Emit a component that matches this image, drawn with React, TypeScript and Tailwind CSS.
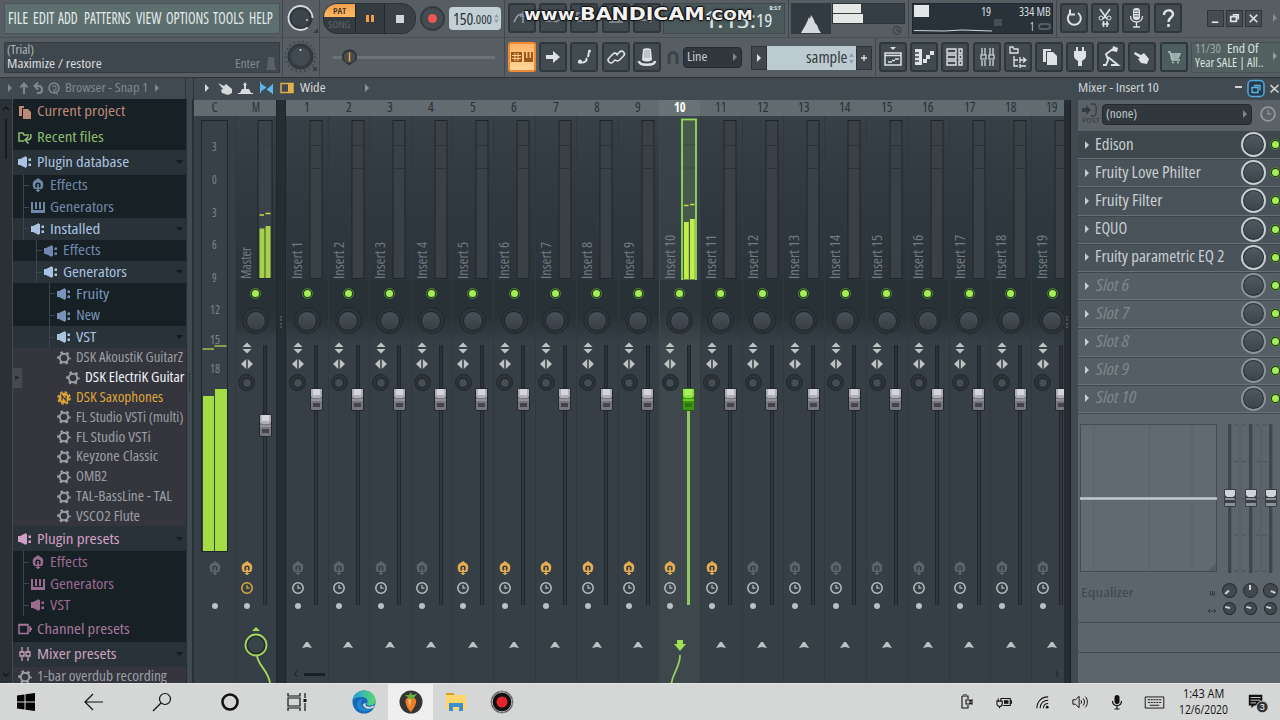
import { useLayoutEffect, useRef, useState, type ReactNode } from 'react';

// Squeezes or stretches a label to an exact width, for the condensed look
function Fit({ w, children, className = '' }: { w: number; children: ReactNode; className?: string }) {
  const ref = useRef<HTMLSpanElement>(null);
  const [scale, setScale] = useState(1);
  useLayoutEffect(() => {
    if (ref.current) setScale(w / ref.current.offsetWidth);
  }, [w]);
  return (
    <span className={`block shrink-0 whitespace-nowrap ${className}`} style={{ width: w }}>
      <span ref={ref} className="inline-block origin-left align-top" style={{ transform: `scaleX(${scale})` }}>
        {children}
      </span>
    </span>
  );
}

const f = 'fill-none stroke-current';

const icons: Record<string, ReactNode> = {
  plug: <path d="M0 4h2l6-3v12l-6-3H0zM7 2h2v10H7zM10.500 3.500H13V6h-2.500zM10.500 8.500H13V11h-2.500z" fill="currentColor" />,
  fx: (
    <g fill="currentColor">
      <path d="M7 0l2.500 2C13 3 12.800 8 11 11H8.800C10 8 10.500 4.500 7 4.500S4 8 5.200 11H3C1.200 8 1 3 4.500 2z" />
      <path d="M6.200 6h1.600v3.500h1.400V11H7.800v1h1.400v1H7.800v1H6.200v-1H4.800v-1h1.400v-1H4.800V9.500h1.400z" />
    </g>
  ),
  keys: <path d="M1 2v10h12V2M5 2v7M9 2v7M2 11h10" className={f} strokeWidth="2" />,
  files: <path d="M1 1h5v2H4v8H1zM5 4h5l3 3v7H5z" fill="currentColor" />,
  recent: <path d="M6 11H1V3h4l1 2h5M12.500 4c1.500 5-1 6-5 6M10.500 6.500L7 10l3.500 3.500" className={f} strokeWidth="1.600" />,
  gear: (
    <g className={f}>
      <circle cx="7" cy="7" r="4.200" strokeWidth="1.900" />
      <circle cx="7" cy="7" r="5.800" strokeWidth="2" strokeDasharray="2.600 3.470" strokeDashoffset="1.300" />
    </g>
  ),
  newgear: (
    <g>
      <circle cx="7" cy="7" r="5.300" fill="currentColor" />
      <circle cx="7" cy="7" r="6" className={f} strokeWidth="1.600" strokeDasharray="2.600 2.110" />
      <path d="M5 9.500v-5l4 5v-5" fill="none" stroke="#34343c" strokeWidth="1.200" />
    </g>
  ),
  channel: <path d="M1 2.500h9v9H1zM12 4v6M1 3h9M13.500 6v2" className={f} strokeWidth="1.500" />,
  mixer: <path d="M4 0v5M4 10v4M10 0v5M10 10v4M2 5h4v4H2zM8 5h4v4H8z" className={f} strokeWidth="1.300" />,
};

const Icon = ({ name, className = '' }: { name: string; className?: string }) => (
  <svg viewBox="0 0 14 14" className={`w-[14px] h-[14px] shrink-0 ${className}`}>{icons[name]}</svg>
);

type Row = { t: string; w: number; i: string; lvl: number; k: 'top' | 'sub' | 'open' | 'item' | 'head'; c: string; more?: number };

const rows: Row[] = [
  { t: 'Current project', w: 88, i: 'files', lvl: 0, k: 'top', c: 'text-[#bd8877]' },
  { t: 'Recent files', w: 67, i: 'recent', lvl: 0, k: 'top', c: 'text-[#8dbb6b]' },
  { t: 'Plugin database', w: 92, i: 'plug', lvl: 0, k: 'head', c: 'text-[#a9c3e0]' },
  { t: 'Effects', w: 38, i: 'fx', lvl: 1, k: 'sub', c: 'text-[#7088a8]' },
  { t: 'Generators', w: 64, i: 'keys', lvl: 1, k: 'sub', c: 'text-[#7088a8]' },
  { t: 'Installed', w: 50, i: 'plug', lvl: 1, k: 'open', c: 'text-[#a9c3e0]' },
  { t: 'Effects', w: 38, i: 'plug', lvl: 2, k: 'sub', c: 'text-[#7088b0]' },
  { t: 'Generators', w: 64, i: 'plug', lvl: 2, k: 'open', c: 'text-[#a9c3e0]' },
  { t: 'Fruity', w: 33, i: 'plug', lvl: 3, k: 'sub', c: 'text-[#7a93b8]' },
  { t: 'New', w: 24, i: 'plug', lvl: 3, k: 'sub', c: 'text-[#7a93b8]' },
  { t: 'VST', w: 20, i: 'plug', lvl: 3, k: 'open', c: 'text-[#a9c3e0]' },
  { t: 'DSK AkoustiK GuitarZ', w: 107, i: 'gear', lvl: 3, k: 'item', c: 'text-[#9b9fa5]' },
  { t: 'DSK ElectriK Guitar', w: 99, i: 'gear', lvl: 3, k: 'item', c: 'text-[#f0f3f5]', more: 8.5 },
  { t: 'DSK Saxophones', w: 87, i: 'newgear', lvl: 3, k: 'item', c: 'text-[#dfa63a]' },
  { t: 'FL Studio VSTi (multi)', w: 107, i: 'gear', lvl: 3, k: 'item', c: 'text-[#9b9fa5]' },
  { t: 'FL Studio VSTi', w: 75, i: 'gear', lvl: 3, k: 'item', c: 'text-[#9b9fa5]' },
  { t: 'Keyzone Classic', w: 82, i: 'gear', lvl: 3, k: 'item', c: 'text-[#9b9fa5]' },
  { t: 'OMB2', w: 31, i: 'gear', lvl: 3, k: 'item', c: 'text-[#9b9fa5]' },
  { t: 'TAL-BassLine - TAL', w: 96, i: 'gear', lvl: 3, k: 'item', c: 'text-[#9b9fa5]' },
  { t: 'VSCO2 Flute', w: 64, i: 'gear', lvl: 3, k: 'item', c: 'text-[#9b9fa5]' },
  { t: 'Plugin presets', w: 82, i: 'plug', lvl: 0, k: 'head', c: 'text-[#d29fc4]' },
  { t: 'Effects', w: 38, i: 'fx', lvl: 1, k: 'sub', c: 'text-[#9a6b90]' },
  { t: 'Generators', w: 64, i: 'keys', lvl: 1, k: 'sub', c: 'text-[#9a6b90]' },
  { t: 'VST', w: 20, i: 'plug', lvl: 1, k: 'sub', c: 'text-[#9a6b90]' },
  { t: 'Channel presets', w: 93, i: 'channel', lvl: 0, k: 'top', c: 'text-[#a5779b]' },
  { t: 'Mixer presets', w: 79, i: 'mixer', lvl: 0, k: 'head', c: 'text-[#c9a3c0]' },
  { t: '1-bar overdub recording', w: 130, i: 'gear', lvl: 0, k: 'item', c: 'text-[#9b9fa5]' },
];

const rowStyle = {
  top: 'h-[25.300px] bg-[#172025] text-[15px]',
  head: 'h-[25px] bg-[#283238] text-[15px]',
  open: 'h-[21.700px] bg-[#283238] text-[15px]',
  sub: 'h-[21.700px] bg-[#172025] text-[15px]',
  item: 'h-[19.800px] bg-[#34353d] text-[14px]',
};

function Browser() {
  return (
    <div className="w-[193px] shrink-0 flex flex-col bg-[#414a50] border-t border-[#30383d]">
      <div className="h-[21px] shrink-0 w-[186px] pb-px flex items-center border-r border-[#2b3338] text-[#7f888d]">
        <svg viewBox="0 0 62 16" className="w-[62px] h-4 shrink-0">
          <path d="M8 4l4 4-4 4z" fill="currentColor" />
          <path d="M24 14V4M20.500 7.500L24 3.500l3.500 4" className={f} strokeWidth="2" />
          <path d="M35 6h4c4 0 4 7 0 7h-2M38 2.500L34.500 6 38 9.500" className={f} strokeWidth="2" />
          <circle cx="54" cy="8" r="5" className={f} strokeWidth="1.500" />
          <path d="M52 6h4v4h-3l5 5" className={f} />
        </svg>
        <Fit w={83} className="ml-[3px] text-[12px] font-medium">Browser - Snap 1</Fit>
        <svg viewBox="0 0 4 8" className="ml-[7px] w-1 h-2"><path d="M0 0l4 4-4 4z" fill="currentColor" /></svg>
      </div>
      <div className="flex flex-1 min-h-0">
        <div className="w-3 shrink-0 bg-[#293137] flex flex-col items-center justify-between">
          <div className="flex flex-col items-center">
            <svg viewBox="0 0 8 5" className="mt-[7px] w-2 h-[5px]"><path d="M1 4l3-3 3 3" fill="none" stroke="#11181c" strokeWidth="1.500" /></svg>
            <div className="mt-2 w-[2px] h-[40px] bg-[#141b20]" />
          </div>
          <svg viewBox="0 0 8 5" className="mb-[6px] w-2 h-[5px]"><path d="M1 1l3 3 3-3" fill="none" stroke="#11181c" strokeWidth="1.500" /></svg>
        </div>
        <div className="w-[173px] ml-px shrink-0 overflow-hidden">
          {rows.map((r, n) => (
            <div key={n} className={`flex items-center ${rowStyle[r.k]} ${r.c}`}>
              <div className="shrink-0 self-stretch flex" style={{ width: 5 + r.lvl * 13.1 + (r.more ?? 0) }}>
                {r.lvl > 0 && r.k !== 'item' && (
                  <div className="flex-1 flex justify-end">
                    <div className="w-2 border-l border-[#3b474c] flex items-center"><div className="w-[5px] h-px bg-[#3b474c]" /></div>
                  </div>
                )}
                {n === 12 && <div className="w-[9px] h-full bg-[#45484e] flex items-center justify-center text-[6px] text-[#22282c]">▶</div>}
              </div>
              <Icon name={r.i} className={r.c === 'text-[#f0f3f5]' ? 'text-[#9b9fa5]' : ''} />
              <Fit w={r.w} className={`ml-[5px] -mt-[2px] ${r.k === 'item' ? '' : 'font-medium'}`}>{r.t}</Fit>
              {(r.k === 'head' || r.k === 'open') && (
                <svg viewBox="0 0 7 4" className="ml-auto mr-[3px] w-[7px] h-1"><path d="M0 0h7L3.500 4z" fill="#141b1f" /></svg>
              )}
            </div>
          ))}
        </div>
        <div className="flex-1 border-l border-[#262e33] border-r border-r-[#262e33] pt-[274px] flex justify-center">
          <div className="h-[18px] border-l border-dotted border-[#222a2f]" />
        </div>
      </div>
    </div>
  );
}

const Handle = ({ green = false }: { green?: boolean }) => (
  <svg viewBox="0 0 13 23" className="w-[13px] h-[23px] shrink-0">
    <rect x="0.500" y="0.500" width="12" height="22" rx="1.500" fill={green ? '#3f9412' : '#77787f'} stroke={green ? '#2c5c14' : '#23282d'} />
    <path d="M1 1h11v7l-2 2H3L1 8z" fill={green ? '#8fe045' : '#aeaeb7'} />
    <path d="M3 1h7v6H3z" fill={green ? '#a9f25e' : '#d4d4dc'} />
    <path d="M1 11h11v2H1z" fill={green ? '#69c92d' : '#92929b'} />
    <path d="M3 15h7v4H3z" fill={green ? '#2d7508' : '#45434c'} />
  </svg>
);

const Led = () => (
  <div className="w-[11px] h-[11px] rounded-full border border-[#55853a] bg-[#1f3520] flex items-center justify-center shrink-0">
    <div className="w-[7px] h-[7px] rounded-full bg-[#a6ee55]" />
  </div>
);

const Clock = ({ className }: { className: string }) => (
  <svg viewBox="0 0 12 12" className={`w-3 h-3 ${className}`}>
    <circle cx="6" cy="6" r="5.200" className={f} strokeWidth="1.500" />
    <path d="M6 3v3.200h2.500" className={f} strokeWidth="1.200" />
  </svg>
);

type StripProps = { head: string; label: string; labelW: number; fxOn?: boolean; selected?: boolean; master?: boolean };

function Strip({ head, label, labelW, fxOn, selected, master }: StripProps) {
  return (
    <div className={`w-[41.400px] shrink-0 flex flex-col border-l ${selected ? 'bg-[#3e474b] border-[#3e474b]' : 'bg-[#363f45] border-[#30393f]'}`}>
      <div className={`h-[16px] shrink-0 pb-[3px] -ml-px flex items-center justify-center text-[14px] leading-[14px] ${selected ? 'bg-[#697277] text-white font-bold' : 'bg-[#626b70] text-[#293136]'}`}>
        <Fit w={head === 'M' ? 8 : head.length * 5.8}>{head}</Fit>
      </div>
      <div className={`h-[164px] shrink-0 flex ${selected ? 'bg-linear-to-b from-[#3b444a] to-[#343e44]' : 'bg-linear-to-b from-[#384147] via-[#303840] to-[#2b343b]'}`}>
        <div className="w-[21px] flex flex-col justify-end pb-px">
          <div className="w-0 h-0 -rotate-90 origin-bottom-left">
            <Fit w={labelW} className="text-[14px] leading-[20px] text-[#727b80]">{label}</Fit>
          </div>
        </div>
        {master || selected ? (
          <svg viewBox="0 0 16 163" className="w-4 h-[163px] overflow-visible">
            <rect x="1" y={selected ? 3.5 : 4.5} width="14" height={selected ? 161 : 158} fill={selected ? '#46594a' : '#3b434a'} stroke={selected ? '#94d95b' : '#1d2429'} strokeWidth={selected ? 1.8 : 1} />
            <path d={master ? 'M2.500 99h4.500M8.500 97.500h5' : 'M3 89.500h4.500M9 88.500h4.500'} stroke="#c5dd48" strokeWidth="1.600" />
            <path d={master ? 'M2.500 112.500h5v49.500h-5zM8.500 110h5v52h-5z' : 'M3 106h4.800v57H3zM9 103h4.800v60H9z'} fill={master ? '#a6d149' : '#c1ee47'} />
            <path d="M2 29h12M2 52h12" stroke="#323a3f" strokeWidth="0.500" />
          </svg>
        ) : (
          <svg viewBox="0 0 16 163" className="w-4 h-[163px]">
            <rect x="2" y="4.500" width="12" height="158" fill="#394147" stroke="#1f262b" />
            <path d="M2 29.500h12M2 52.500h12" stroke="#2b3237" />
          </svg>
        )}
      </div>
      <div className={`h-[61px] shrink-0 flex flex-col items-center ${selected ? 'bg-linear-to-b from-[#2d373b] from-50% to-[#3c454a]' : 'bg-linear-to-b from-[#273136] from-60% to-[#363f45]'}`}>
        <div className="mt-2 -ml-px"><Led /></div>
        <div className="mt-[8px] -ml-px w-[27px] h-[27px] shrink-0 rounded-full bg-[#2c343a] border border-[#20272c] flex items-center justify-center">
          <div className="w-5 h-5 rounded-full border border-[#1d2429] bg-linear-to-b from-[#495158] to-[#373f45]" />
        </div>
      </div>
      <div className="h-[268px] shrink-0 flex">
        <div className="w-[21px] flex flex-col items-center text-[#bdc2c4]">
          <svg viewBox="0 0 12 30" className="mt-[1px] w-3 h-[30px] shrink-0">
            <path d="M1.500 5L6 .5 10.500 5zM1.500 7h9L6 11.500zM5.200 17v10L0 22zM6.800 17v10L12 22z" fill="currentColor" />
          </svg>
          <div className="mt-[2px] w-[17px] h-[17px] rounded-full bg-[#2c343a] border border-[#20272c] flex items-center justify-center shrink-0">
            <div className="w-[10px] h-[10px] rounded-full border border-[#1d2429] bg-[#444d53]" />
          </div>
          <Icon name="fx" className={`mt-[170px] ${fxOn ? 'text-[#e6ae50]' : 'text-[#5d656b]'}`} />
          <Clock className={`mt-[7px] shrink-0 ${master ? 'text-[#d9a93f]' : 'text-[#b8bec1]'}`} />
          <div className="mt-[9px] w-[6px] h-[6px] rounded-full bg-[#b9bfc2] shrink-0" />
        </div>
        <div className="w-4 flex flex-col items-center">
          <div className={`w-[4px] mt-[4px] shrink-0 bg-[#2a3237] border-x border-[#1f262b] ${master ? 'h-[69px]' : 'h-[43px]'}`} />
          <Handle green={selected} />
          <div className={`shrink-0 ${selected ? 'w-[3px] bg-[#8fc962]' : 'w-[4px] bg-[#2f373c] border-x border-[#20272c]'} ${master ? 'h-[168px]' : 'h-[194px]'}`} />
        </div>
      </div>
      <div className="flex-1 min-h-0 flex flex-col items-center">
        {master ? (
          <svg viewBox="0 0 30 57" className="mt-[18px] w-[30px] h-[57px] shrink-0">
            <path d="M11 4l4-4 4 4z" fill="#a4d85c" />
            <circle cx="15" cy="18" r="10.500" fill="#22292c" stroke="#a4d85c" strokeWidth="1.800" />
            <circle cx="15" cy="18" r="8" fill="#3b434a" />
            <path d="M16 29c2 11 11 14 13 27" fill="none" stroke="#a4d85c" strokeWidth="1.800" />
          </svg>
        ) : selected ? (
          <svg viewBox="0 0 20 46" className="mt-[31px] w-5 h-[46px] shrink-0">
            <path d="M7 0h6v4h3l-6 7-6-7h3z" fill="#9ee054" />
            <path d="M10 15c0 13-8 18-9 31" fill="none" stroke="#94cf62" strokeWidth="1.800" />
          </svg>
        ) : (
          <svg viewBox="0 0 10 6" className="-ml-px mt-[33px] w-[10px] h-[6px]"><path d="M0 6l4-6h2l4 6-5-1z" fill="#bcc1c3" /></svg>
        )}
      </div>
    </div>
  );
}

const inserts = Array.from({ length: 19 }, (_, i) => i + 1);
const scale = [['3', 'mt-[17px]'], ['0', 'mt-[17px]'], ['3', 'mt-[16.500px]'], ['6', 'mt-[16.500px]'], ['9', 'mt-[16.500px]'], ['12', 'mt-[16px]'], ['15', 'mt-[14px]'], ['18', 'mt-[13px]']];

function Mixer() {
  return (
    <div className="w-[885px] shrink-0 flex flex-col bg-[#414a50] border-t border-l border-[#2b3338]">
      <div className="h-[22px] shrink-0 pb-[2px] flex items-center text-[#d5dadc]">
        <svg viewBox="0 0 102 16" className="w-[102px] h-4 shrink-0">
          <path d="M11 4l4 4-4 4z" fill="currentColor" />
          <path d="M24 3l6 3 2-2 6 5v4l-4 2-6-2-1-3 2-1z" fill="currentColor" />
          <path d="M51 2l2 3h-1v4h3l2 4h2v1H44v-1h2l2-4h2V5h-1z" fill="currentColor" />
          <path d="M66 3l6 4v1l-6 4z M79 4v10l-6-4V9z" fill="#5fb5e8" />
          <path d="M66.500 2v11M78.500 4v10" stroke="#5fb5e8" />
          <path d="M87 3.500h12v9H87z" fill="none" stroke="#e2b04a" strokeWidth="1.500" />
          <path d="M94 4h5v8h-5z" fill="#e2b04a" />
        </svg>
        <Fit w={25} className="ml-1 text-[12px] font-medium">Wide</Fit>
        <svg viewBox="0 0 4 8" className="ml-[40px] w-1 h-2"><path d="M0 0l4 4-4 4z" fill="#8b9397" /></svg>
      </div>
      <div className="flex flex-1 min-h-0">
        <div className="w-[41px] shrink-0 bg-[#363f45] flex flex-col">
          <div className="h-4 shrink-0 pb-[3px] bg-[#626b70] flex items-center justify-center text-[14px] leading-[14px] text-[#293136]"><Fit w={6}>C</Fit></div>
          <div className="mt-[4px] mx-auto w-[27px] h-[432px] shrink-0 bg-[#394148] border border-[#1f262b] flex flex-col items-center text-[13px] leading-4 text-[#7b8489]">
            {scale.map(([s, mt], i) => <Fit key={i} w={s.length * 5} className={`${mt}`}>{s}</Fit>)}
            <svg viewBox="0 0 25 208" className="-mt-[32px] w-[25px] h-[208px] shrink-0">
              <path d="M0.500 5h11.500M12.500 2h12" stroke="#a2bf4e" strokeWidth="1.500" />
              <path d="M1 52h11v155H1zM13 45h12v162H13z" fill="#a3dc45" />
            </svg>
          </div>
          <Icon name="fx" className="mt-[9px] mx-auto text-[#5d656b]" />
          <div className="mt-[28px] mx-auto w-[6px] h-[6px] rounded-full bg-[#b9bfc2]" />
        </div>
        <Strip head="M" label="Master" labelW={32} fxOn master />
        <div className="w-[10px] shrink-0 bg-[#262e34] border-x border-[#1f262b] pt-[216px] flex justify-center">
          <div className="h-3 border-l-2 border-dotted border-[#495157]" />
        </div>
        <div className="relative w-[777.500px] shrink-0 overflow-hidden flex">
          {inserts.map((n) => (
            <Strip key={n} head={`${n}`} label={`Insert ${n}`} labelW={n > 9 ? 44 : 37} fxOn={n >= 5 && n <= 11} selected={n === 10} />
          ))}
          <div className="absolute left-[8px] right-[5px] bottom-[5px] flex items-center">
            <svg viewBox="0 0 4 8" className="w-1 h-2"><path d="M3 1L1 4l2 3" fill="none" stroke="#192025" /></svg>
            <div className="ml-[6px] w-[21px] h-[3px] bg-[#192025]" />
            <svg viewBox="0 0 4 8" className="ml-auto w-1 h-2"><path d="M1 1l2 3-2 3" fill="none" stroke="#192025" /></svg>
          </div>
        </div>
        <div className="w-[7px] bg-[#262e34] border-r border-[#1a2024] pt-[216px]"><div className="ml-[2px] h-3 w-0 border-l-2 border-dotted border-[#495157]" /></div>
        <div className="flex-1 bg-[#414a50]" />
      </div>
    </div>
  );
}

const slots: [string, number][] = [['Edison', 39], ['Fruity Love Philter', 106], ['Fruity Filter', 67], ['EQUO', 32], ['Fruity parametric EQ 2', 129], ['Slot 6', 33], ['Slot 7', 33], ['Slot 8', 33], ['Slot 9', 33], ['Slot 10', 40]];

const SmallHandle = () => (
  <svg viewBox="0 0 12 18" className="w-3 h-[18px] shrink-0">
    <rect width="12" height="18" rx="1" fill="#3b4046" />
    <path d="M1 1h10v5l-2 2H3L1 6z" fill="#ced4da" />
    <path d="M1 9h10v2H1zM1 14h10v3H1z" fill="#8a9299" />
  </svg>
);

const knobAngles = ['rotate-[-135deg]', 'rotate-0', 'rotate-[110deg]'];

function InsertPanel() {
  return (
    <div className="flex-1 overflow-hidden flex flex-col bg-[#414a50] border-t border-[#2b3338]">
      <div className="h-[22px] shrink-0 pb-[3px] flex items-center text-[#cdd3d6]">
        <Fit w={81} className="text-[12px] font-medium">Mixer - Insert 10</Fit>
        <svg viewBox="0 0 46 18" className="ml-[76px] w-[46px] h-[18px] shrink-0 overflow-visible">
          <path d="M0 8h7" stroke="currentColor" strokeWidth="2" />
          <rect x="13" y="1.500" width="16" height="16" rx="4" fill="#253b4a" stroke="#55aadd" strokeWidth="1.500" />
          <path d="M19 6.500h6v5M17 8.500h6v5h-6z" fill="none" stroke="#63b8e8" strokeWidth="1.300" />
          <path d="M35.500 6l8 7.500M43.500 6l-8 7.500" stroke="currentColor" strokeWidth="1.600" />
        </svg>
      </div>
      <div className="h-[31px] shrink-0 bg-[#5a6268] flex items-center pb-[3px]">
        <div className="w-[24px] flex flex-col items-center text-[#353d42]">
          <svg viewBox="0 0 16 14" className="w-4 h-[14px]"><path d="M0 5h4V2l5 5-5 5V9H0z" fill="currentColor" /><path d="M9 1h3c3 0 3 12 0 12H9" className={f} strokeWidth="1.300" /></svg>
          <Fit w={17} className="text-[7px] leading-[8px]">POST</Fit>
        </div>
        <div className="w-[150px] h-[21px] shrink-0 rounded-sm border border-[#242b30] bg-[#30383d] flex items-center pb-px px-[3px] text-[#c2c9cc]">
          <Fit w={31} className="text-[12px]">(none)</Fit>
          <svg viewBox="0 0 4 8" className="ml-auto mr-px w-1 h-2"><path d="M0 0l4 4-4 4z" fill="#7d868b" /></svg>
        </div>
        <svg viewBox="0 0 12 12" className="ml-[8px] shrink-0 w-4 h-4 text-[#8d9599]"><circle cx="6" cy="6" r="5.200" className={f} strokeWidth="1.400" /><path d="M6 3v3h2.500" className={f} /></svg>
      </div>
      {slots.map(([name, w], i) => (
        <div key={name} className={`h-[28.200px] shrink-0 w-[202px] flex items-center pb-px border-b border-b-[#697278] border-t border-t-[#3d464b] pl-[7px] ${i === 0 ? 'bg-[#3e474c]' : i < 5 ? 'bg-[#4a5359]' : 'bg-[#555e64]'}`}>
          <svg viewBox="0 0 4 8" className="w-1 h-2 shrink-0"><path d="M0 0l4 4-4 4z" fill="#c5ccd0" /></svg>
          <Fit w={w} className={`-mt-[2px] text-[16px] ${i < 5 ? 'ml-[6px] font-medium text-[#c7ced1]' : 'ml-[7px] italic font-medium text-[#7f878c]'}`}>{name}</Fit>
          <div className={`ml-auto w-[25px] h-[25px] shrink-0 rounded-full border-2 flex items-center justify-center ${i < 5 ? 'border-[#c8cfd3]' : 'border-[#8b9398]'} bg-[#272e33]`}>
            <div className="w-[19px] h-[19px] rounded-full bg-linear-to-b from-[#505860] to-[#3d454c]" />
          </div>
          <div className="ml-[4px] mr-[-1px] shrink-0"><Led /></div>
        </div>
      ))}
      <div className="flex-1 bg-[#5c656b] flex flex-col border-t border-[#414a4f]">
        <div className="h-[158px] shrink-0 flex pt-[10px] pl-[2px]">
          <svg viewBox="0 0 137 148" className="w-[137px] h-[148px] shrink-0">
            <rect x="0.500" y="0.500" width="136" height="147" fill="#616a70" stroke="#434c51" />
            <path d="M14 1v146M69.500 1v146M112 1v146" stroke="#596268" />
            <path d="M136 139v8h-8z" fill="#535c61" />
            <path d="M0 74.500h137" stroke="#bfc9d0" strokeWidth="2.500" />
          </svg>
          <div className="flex ml-[7px]">
            {[0, 1, 2].map((n) => (
              <div key={n} className="w-[20.600px] flex">
                <div className="w-3 shrink-0 flex flex-col items-center">
                  <div className="w-[4px] h-[65px] shrink-0 bg-[#3f474d] border-r border-[#50595e]" />
                  <SmallHandle />
                  <div className="w-[4px] h-[66px] shrink-0 bg-[#3f474d] border-r border-[#50595e]" />
                </div>
                {n < 2 && (
                  <svg viewBox="0 0 14 148" className="-ml-[3px] w-[14px] h-[148px] shrink-0">
                    <path d="M1 1h12M1 37.500h12M1 74.500h12M1 111h12M1 147h12" stroke="#4a5258" strokeDasharray="5 2" />
                    <path d="M7 2v144" stroke="#586167" strokeWidth="3" />
                  </svg>
                )}
              </div>
            ))}
          </div>
        </div>
        <div className="h-[51px] shrink-0 flex border-b border-[#434c51] pl-[3px] pt-[11px]">
          <Fit w={53} className="text-[13px] leading-[18px] font-medium text-[#3f484e]">Equalizer</Fit>
          <svg viewBox="0 0 10 30" className="ml-[73px] w-[10px] h-[30px] shrink-0"><path d="M3.500 8v4h4V8M5.500 8v4M1 28h8M3 26l-2 2 2 2M7 26l2 2-2 2" fill="none" stroke="#353d42" /></svg>
          <div className="ml-[5px] grid grid-cols-[20.600px_20.600px_20.600px] gap-y-[4px] content-start">
            {[0, 1, 2, 3, 4, 5].map((n) => (
              <div key={n} className={`rounded-full border border-[#252c31] bg-[#41494f] flex justify-center ${n < 3 ? `w-[15px] h-[15px] ${knobAngles[n]}` : 'w-[13px] h-[13px] ml-px rotate-[-75deg]'}`}>
                <div className="mt-px w-[2px] h-[5px] bg-[#cfd4d7]" />
              </div>
            ))}
          </div>
        </div>
        <div className="h-[30px] shrink-0 border-b border-[#434c51]" />
      </div>
    </div>
  );
}

const Tool = ({ children, className = 'bg-[#414a4f] text-[#dde2e4]' }: { children: ReactNode; className?: string }) => (
  <div className={`w-[28px] h-[30px] mr-[3.200px] shrink-0 rounded-[3px] border-2 border-[#30373c] flex items-center justify-center ${className}`}>
    <svg viewBox="0 0 20 20" className="w-5 h-5 shrink-0 overflow-visible">{children}</svg>
  </div>
);

const dim = 'bg-[#414a4f] text-[#9aa1a5]';

const Sep = ({ className = '' }: { className?: string }) => <div className={`w-px self-stretch shrink-0 bg-[#40484d] ${className}`} />;

const menu: [string, number, string][] = [['FILE', 20, ''], ['EDIT', 21, 'ml-[5px]'], ['ADD', 20, 'ml-[4px]'], ['PATTERNS', 47, 'ml-[6px]'], ['VIEW', 25, 'ml-[5px]'], ['OPTIONS', 43, 'ml-[5px]'], ['TOOLS', 31, 'ml-[4px]'], ['HELP', 24, 'ml-[5px]']];

function Toolbar() {
  return (
    <div className="relative h-[77px] shrink-0 bg-[#565e64] flex flex-col">
      <div className="h-[38px] flex items-start pt-[3px] border-b border-[#495156]">
        <div className="ml-1 w-[276px] h-[31px] shrink-0 border border-[#4b5559] bg-[#5d6f6f] flex items-center pl-[3px] text-[15.500px] font-medium text-[#e4eceb]">
          {menu.map(([t, w, m]) => <Fit key={t} w={w} className={m}>{t}</Fit>)}
        </div>
        <Sep className="ml-[2px] -mt-[3px] h-[38px]" />
        <svg viewBox="0 0 36 32" className="w-[36px] h-8 shrink-0">
          <circle cx="17.500" cy="15" r="12" fill="#30373d" stroke="#d4d9dc" strokeWidth="1.800" strokeDasharray="64 12" strokeDashoffset="-11" />
          <circle cx="17.500" cy="15" r="9" fill="#3d454c" />
          <circle cx="24" cy="17" r="1" fill="#c5cbcf" />
          <path d="M30 30h5v-5z" fill="#353d42" />
        </svg>
        <Sep className="-mt-[3px] h-[38px]" />
        <div className="ml-[3px] w-[93px] h-[31px] shrink-0 rounded-[14px] overflow-hidden border border-[#2b3237] bg-[#333b41] flex">
          <div className="w-[31px] flex flex-col items-center text-[9px] text-[#5d656a]">
            <div className="w-full h-[13px] bg-linear-to-b from-[#f0a04a] to-[#ffb866] flex items-center justify-center text-[#46301c] font-semibold"><Fit w={13}>PAT</Fit></div>
            <Fit w={23} className="mt-px">SONG</Fit>
          </div>
          <div className="w-[30px] border-x border-[#20272b] flex items-center justify-center gap-[2px]"><div className="w-[3px] h-[7px] bg-[#ee9e4b]" /><div className="w-[3px] h-[7px] bg-[#ee9e4b]" /></div>
          <div className="flex-1 flex items-center justify-center bg-[#394147]"><div className="w-[8px] h-[8px] bg-[#d1d6d8]" /></div>
        </div>
        <div className="ml-[4px] mt-[3px] w-[25px] h-[25px] shrink-0 rounded-full border-2 border-[#343b40] bg-[#444c52] flex items-center justify-center"><div className="w-[9px] h-[9px] rounded-full bg-[#ee5652]" /></div>
        <div className="ml-[4px] mt-[4px] w-[52px] h-[23px] shrink-0 rounded-[4px] bg-[#c3d0d6] text-[#2c3439] flex items-center pl-[4px]">
          <Fit w={20} className="text-[16px]">150</Fit><Fit w={19} className="text-[12px] mt-[3px]">.000</Fit>
          <svg viewBox="0 0 5 9" className="ml-[2px] w-[5px] h-[9px]"><path d="M0 3.500L2.500 0 5 3.500zM0 5.500h5L2.500 9z" fill="#93a0a6" /></svg>
        </div>
        <Sep className="ml-[3px] mr-[3px] -mt-[3px] h-[38px]" />
        <Tool className={dim}><path d="M2 14c3-7 5-8 9-8M11 3v12M8 8h8" className={f} strokeWidth="1.500" /></Tool>
        <Tool className={dim}><path d="M2 13h9a4 4 0 104-7" className={f} strokeWidth="1.500" /></Tool>
        <Tool className={dim}><path d="M3 5h5v4H3zM3 13h6M12 7v7M15 7v7" className={f} strokeWidth="1.500" /></Tool>
        <Tool className={dim}><path d="M3 14h14M6 14l4-7 4 7" className={f} strokeWidth="1.500" /></Tool>
        <Tool className={dim}><path d="M2 8h10v4H2zM13 14l4-6" className={f} strokeWidth="1.500" /></Tool>
        <div className="-ml-px w-[122px] h-[31px] shrink-0 bg-[#4b595b] border border-[#3f4a4d] text-[#dce5e6] flex items-end justify-end pr-[12px] relative">
          <Fit w={52} className="text-[24px] leading-[29px]">1:13:</Fit>
          <Fit w={16} className="text-[18px] leading-[25px]">19</Fit>
          <span className="absolute right-[3px] top-[1px] text-[6px] leading-[7px] font-bold">B:S:T</span>
        </div>
        <Sep className="ml-[3px] mr-[2px] -mt-[3px] h-[38px]" />
        <svg viewBox="0 0 40 31" className="w-10 h-[31px] shrink-0 bg-[#323b42]"><path d="M10 30l1-2 3-5 2-4 2-5 1 2 1-4 2 3 2 5 2 2 2 5 2 3z" fill="#d3d9dc" /></svg>
        <div className="ml-[1px] w-[73px] shrink-0 flex flex-col">
          <div className="h-[21px] bg-[#353e44] border border-[#2c3439] flex flex-col gap-px"><div className="w-[28px] h-[9px] bg-[#e5e8e4]" /><div className="w-[30px] h-[9px] bg-[#e5e8e4]" /></div>
          <svg viewBox="0 0 12 9" className="ml-auto mr-[2px] mt-[2px] w-3 h-[9px]"><circle cx="6" cy="4.500" r="4" fill="none" stroke="#343c41" /><path d="M6 2v3h3" stroke="#343c41" fill="none" /></svg>
        </div>
        <Sep className="ml-[3px] mr-[3px] -mt-[3px] h-[38px]" />
        <div className="w-[141px] h-[31px] shrink-0 bg-[#29323a] border border-[#20282e] flex text-[12px] leading-[15px] text-[#d5dbde]">
          <div className="w-[80px] flex flex-col justify-between">
            <div className="flex justify-between pr-[2px]"><div className="mt-px ml-px w-[15px] h-[12px] bg-[#e1e6e8]" /><Fit w={10}>19</Fit></div>
            <svg viewBox="0 0 80 4" className="w-20 h-1 mb-px"><path d="M1 2.500l30 .5 18-1 30 1" fill="none" stroke="#d0d6d9" /></svg>
          </div>
          <div className="flex-1 flex flex-col items-end pr-px">
            <Fit w={32}>334 MB</Fit>
            <div className="flex items-center gap-1 w-full"><div className="ml-px w-[8px] h-[7px] bg-[#454e54] -mt-2" /><Fit w={4} className="ml-auto">1</Fit><div className="w-[13px] h-[7px] rounded-full border-2 border-[#545d63]" /></div>
          </div>
        </div>
        <Sep className="ml-[3px] mr-[3px] -mt-[3px] h-[38px]" />
        <Tool><path d="M6 5.500a6.500 6.500 0 108-.5M6 1.500v5h5" className={f} strokeWidth="2" /></Tool>
        <Tool><path d="M5 1l7 10M15 1L8 11M7 16h7M8.500 13v6M12 13v6" className={f} strokeWidth="1.600" /><circle cx="6" cy="10" r="2" className={f} /><circle cx="14" cy="10" r="2" className={f} /></Tool>
        <Tool><rect x="7" y="0" width="7" height="12" rx="3" fill="currentColor" /><path d="M4.500 8c0 8 12 8 12 0M10.500 14v5M7 19h7" className={f} strokeWidth="1.300" /><path d="M8 3h5M8 5.500h5M8 8h5" stroke="#414a4f" strokeWidth="0.800" /></Tool>
        <Tool><path d="M6 7c0-6 9-6 9-1 0 4-4.500 3-4.500 8M10.500 16v3" className={f} strokeWidth="2.500" /></Tool>
        <div className="ml-[22px] mt-[7px] flex gap-[2px] text-[#dde2e4]">
          {['M4 12h7', 'M6 4h6v5M4 6h6v5H4z', 'M4 4l8 8M12 4l-8 8'].map((d) => (
            <div key={d} className="w-[17px] h-[17px] border border-[#2f363b] bg-[#444c52]"><svg viewBox="0 0 16 16" className="w-[15px] h-[15px]"><path d={d} className={f} strokeWidth="1.800" /></svg></div>
          ))}
        </div>
        <svg viewBox="0 0 4 8" className="ml-[11px] mt-[11px] w-1 h-2"><path d="M0 0l4 4-4 4z" fill="#858d92" /></svg>
      </div>

      <div className="h-[39px] flex items-start pt-[4px]">
        <div className="ml-1 w-[276px] h-[31px] shrink-0 border border-[#343b41] bg-[#3f474e] px-[2px] text-[#d7dcde] flex justify-between items-end">
          <div className="flex flex-col leading-[14px] text-[12px] pb-px"><Fit w={27} className="text-[#b0b7ba]">(Trial)</Fit><Fit w={95} className="font-medium">Maximize / restore</Fit></div>
          <div className="flex items-center gap-[5px] text-[#82898e] text-[12px] leading-[16px]"><Fit w={25}>Enter</Fit><svg viewBox="0 0 12 16" className="w-3 h-4"><path d="M4 2h4l1 10H3zM1 13h10" fill="#596168" stroke="#596168" strokeWidth="2" /></svg></div>
        </div>
        <Sep className="ml-[2px] -mt-[4px] h-[38px]" />
        <svg viewBox="0 0 36 32" className="-mt-px w-[36px] h-8 shrink-0">
          <circle cx="17.500" cy="15.500" r="15" fill="none" stroke="#3b4348" strokeWidth="2" strokeDasharray="1.500 3" />
          <circle cx="17.500" cy="15.500" r="12.500" fill="#343c42" stroke="#2a3136" />
          <circle cx="17.500" cy="15.500" r="9.500" fill="#424a51" />
          <circle cx="17.500" cy="9" r="1" fill="#d0d5d8" />
          <path d="M30 26h4v4h-4z" fill="#3b4348" />
        </svg>
        <Sep className="-mt-[4px] h-[38px]" />
        <svg viewBox="0 0 184 30" className="w-[184px] h-[30px] shrink-0">
          <path d="M13 15.500h162" stroke="#6c747a" strokeWidth="3" />
          <path d="M22 15c0-10 15-10 15 0 0 5-4 5-7.500 8.500C26 20 22 20 22 15z" fill="#2c3237" />
          <circle cx="29.500" cy="15" r="6" fill="#4a4b4c" /><path d="M29.500 10.500v9" stroke="#efa04a" strokeWidth="1.500" />
        </svg>
        <Sep className="mr-[3px] -mt-[4px] h-[38px]" />
        <Tool className="bg-linear-to-b from-[#ffb566] to-[#ffd69a] !border-[#ee8a36]"><path d="M-1 5h11v10H-1z M12 5h2v6h1.500V5h2v6H19V5h2v10h-9z" fill="#9c561a" /><path d="M0 8.500h9M0 11.500h9M3 6v8M6 6v8" stroke="#ffcf93" /></Tool>
        <Tool><path d="M3 8h7V4l7 6-7 6v-4H3z" fill="currentColor" /></Tool>
        <Tool><path d="M4 15c7 2 10-2 8-4M14 10l1-5" className={f} strokeWidth="2" /><circle cx="6" cy="14.500" r="2" fill="currentColor" /><circle cx="15.500" cy="4" r="1.500" fill="currentColor" /></Tool>
        <Tool><path d="M9 12L6.500 14.500a2.700 2.700 0 01-4-4l4-4a2.700 2.700 0 014 0M10 8l3-3.500a2.700 2.700 0 014 4l-4 4a2.700 2.700 0 01-4 0" transform="translate(.5 .5)" className={f} strokeWidth="1.600" /></Tool>
        <Tool><path d="M6 2c2-1 6-1 8 0l1 11c-3 2-7 2-10 0z" fill="currentColor" /><path d="M2 14c0 5 16 5 16 0" className={f} strokeWidth="2.500" /><path d="M8 3v8M10 3v8M12 3v8" stroke="#8b969d" strokeWidth="0.800" /></Tool>
        <svg viewBox="0 0 12 14" className="ml-[3px] mt-[9px] w-3 h-[14px] shrink-0"><path d="M2 13V6c0-6 8-6 8 0v7" fill="none" stroke="#3b4348" strokeWidth="3" /></svg>
        <div className="ml-[4px] mt-[5px] w-[59px] h-[21px] shrink-0 rounded-sm border border-[#242b30] bg-[#30383e] flex items-center pb-[2px] pl-[3px] pr-[4px] text-[#c8ced1]">
          <Fit w={20} className="text-[12px]">Line</Fit><svg viewBox="0 0 4 8" className="ml-auto w-1 h-2"><path d="M0 0l4 4-4 4z" fill="#7d868b" /></svg>
        </div>
        <div className="ml-[9px] mt-[4px] h-[24px] shrink-0 flex text-[#dce1e3]">
          <div className="w-[16px] border border-[#2c3338] bg-[#3f474d] flex items-center justify-center"><svg viewBox="0 0 4 8" className="w-1 h-2"><path d="M0 0l4 4-4 4z" fill="currentColor" /></svg></div>
          <div className="w-[89px] bg-[#bccad1] text-[#323a40] flex items-center pb-[3px] justify-end pr-[2px]"><Fit w={41} className="text-[17px]">sample</Fit><svg viewBox="0 0 5 11" className="ml-[2px] mt-[3px] w-[5px] h-[11px]"><path d="M0 4L2.500 0 5 4zM0 7h5L2.500 11z" fill="#93a0a6" /></svg></div>
          <div className="w-[16px] border border-[#2c3338] bg-[#3f474d] flex items-center justify-center"><svg viewBox="0 0 8 8" className="w-2 h-2"><path d="M4 1v6M1 4h6" className={f} strokeWidth="1.400" /></svg></div>
        </div>
        <Sep className="ml-[3px] mr-[3px] -mt-[4px] h-[38px]" />
        <Tool><path d="M7 0h6l-3 3z" fill="currentColor" /><path d="M2 6h16v12H2zM2 8.500h16M5 15h4M9 13.500h3M12 12h4" className={f} strokeWidth="1.500" /></Tool>
        <Tool><path d="M1 2h7v16H1zM9 12h4v4H9zM12 8h4v4h-4zM16 4h4v4h-4z" fill="currentColor" /><path d="M1 6h4M1 10h4M1 14h4" stroke="#414a4f" strokeWidth="1.500" /></Tool>
        <Tool><path d="M2 2h9v4H2zM2 8h9v4H2zM2 14h9v4H2zM14 2h3v4h-3zM14 8h3v4h-3zM14 14h3v4h-3z" className={f} strokeWidth="1.400" /></Tool>
        <Tool><path d="M5 1v7M8 1v7M5 13v6M8 13v6M13 1v7M16 1v7M13 13v6M16 13v6M4 8h5v4H4zM12 8h5v4h-5z" className={f} strokeWidth="1.200" /></Tool>
        <Tool><path d="M2 0h3l1 2h4v4H2zM6 9v10h4M6 13h4M12 10v6M12 13h6M15 10.500l3 2.500-3 2.500M12 17v4M12 19h6" className={f} strokeWidth="1.300" /></Tool>
        <Tool><path d="M4 2h8v2H7v11H4zM8 5h6l4 4v9H8z" fill="currentColor" /></Tool>
        <Tool><path d="M6 0h2v4h4V0h2v4h2v5c0 3-3 4-4 5v5H8v-5c-1-1-4-2-4-5V4h2z" fill="currentColor" /></Tool>
        <Tool><path d="M12-1l5 2-1 4-5-1z" fill="currentColor" /><path d="M12 2L5 7l2 6-2 5H2M7 10l10 8H10" className={f} strokeWidth="1.900" /></Tool>
        <Tool><path d="M3 5l6 3 3-2 5 6-2 5-6-1-3-4 2-1L2 7z" fill="currentColor" /></Tool>
        <Tool className="bg-[#4c5f5e] text-[#b7c6c4]"><path d="M4 5h2l2 8h8M7 7h9l-2 4H8M7 9h8" className={f} strokeWidth="1.300" /><circle cx="9" cy="15.500" r="1" fill="currentColor" /><circle cx="14" cy="15.500" r="1" fill="currentColor" /></Tool>
        <div className="w-[92px] h-[31px] shrink-0 bg-[#52605f] border border-[#46524f] text-[12px] leading-[14px] text-[#dbe2e2] flex items-center pb-[3px] pl-[3px]">
          <div className="flex flex-col"><div className="flex gap-[6px]"><Fit w={26} className="text-[#9eaaaa]">11/30</Fit><Fit w={31}>End Of</Fit></div><Fit w={69}>Year SALE | All..</Fit></div>
          <svg viewBox="0 0 4 8" className="ml-[9px] w-1 h-2"><path d="M0 0l4 4-4 4z" fill="#93a09f" /></svg>
        </div>
      </div>

      <div className="absolute left-[524px] top-[2px] font-['DejaVu_Sans'] font-bold text-[16px] leading-[24px] text-[#f2f2f2] [text-shadow:1px_0_1px_#111,-1px_0_1px_#111,0_1px_1px_#111,0_-1px_1px_#111,0_0_3px_#222]">
        <Fit w={229}>www.<span className="text-[18px]">BANDICAM</span>.<span className="text-[14px]">COM</span></Fit>
      </div>
    </div>
  );
}

const slot = 'shrink-0 flex items-center justify-center h-full';

function Taskbar() {
  return (
    <div className="h-[37px] shrink-0 bg-[#d5d6d6] border-t border-[#e2e2e2] flex items-center text-[#111]">
      <div className={`${slot} w-[52px]`}><svg viewBox="0 0 20 20" className="w-5 h-5"><path d="M1 3.500l7.500-1v7H1zM9.500 2.300L19 1v8.500H9.500zM1 10.500h7.500v7l-7.500-1zM9.500 10.500H19V19l-9.500-1.300z" fill="#050505" /></svg></div>
      <div className={`${slot} w-[84px]`}><svg viewBox="0 0 20 20" className="w-5 h-5"><path d="M19 10H1.500M9 2l-8 8 8 8" className={f} strokeWidth="1.200" /></svg></div>
      <div className={`${slot} w-[52px]`}><svg viewBox="0 0 20 20" className="w-5 h-5"><circle cx="13" cy="7" r="5.500" className={f} strokeWidth="1.200" /><path d="M9 11l-8 8" className={f} strokeWidth="1.300" /></svg></div>
      <div className={`${slot} w-[84px]`}><svg viewBox="0 0 20 20" className="w-5 h-5"><circle cx="10" cy="10" r="7.500" className={f} strokeWidth="2.600" /></svg></div>
      <div className={`${slot} w-[50px]`}><svg viewBox="0 0 20 20" className="w-5 h-5"><path d="M1 1v3h12V1M1 6h12v8H1zM1 19v-3h12v3M18 1v5M18 11v8" className={f} strokeWidth="1.200" /><path d="M16.500 7h3v3h-3z" fill="currentColor" /></svg></div>
      <div className={`${slot} ml-[19px] w-[46px]`}>
        <svg viewBox="0 0 24 24" className="w-6 h-6"><defs><linearGradient id="edge" x1="0" x2="1"><stop offset="0" stopColor="#1c9fdf" /><stop offset="1" stopColor="#5fd86a" /></linearGradient></defs>
          <circle cx="12" cy="12" r="11.500" fill="#1769b5" /><path d="M.5 11C2-4 24-2 23.500 11c0 5-8 6-9 3 3-4-1-7-5-7C5 7 1 9 .5 11z" fill="url(#edge)" /><path d="M11 9c-5 5 0 12 9 9-5 6-16 4-15-5 1-3 4-4 6-4z" fill="#2086cf" /><path d="M14 13c-2 4 4 5 9 2l-2 3c-5 2-10 0-10-4z" fill="#d5d6d6" /></svg>
      </div>
      <div className={`${slot} ml-px w-[45px] bg-[#efefef]`}>
        <svg viewBox="0 0 24 24" className="w-6 h-6"><circle cx="12" cy="12" r="11.500" fill="#353535" /><path d="M6.500 10c2-4 9-4 10.500 0 1 4-3 9-5 12-3-2-6-8-5.500-12z" fill="#f07d22" /><path d="M9 10c1-1 3-1 3 0l-1 8z" fill="#ffc172" /><path d="M11 9L6 5l4 0 2-3 1 3 5-1-4 5z" fill="#67b238" /></svg>
      </div>
      <div className={`${slot} w-[46px]`}><svg viewBox="0 0 22 20" className="w-[22px] h-5"><path d="M1 1h7l2 2h11v15H1z" fill="#ffd66b" /><path d="M1 1h7l2 2H1z" fill="#d99b27" /><path d="M4 19v-8h14v8h-4v-4H8v4z" fill="#3b8fd0" /></svg></div>
      <div className={`${slot} w-[46px]`}><svg viewBox="0 0 24 24" className="w-6 h-6"><circle cx="12" cy="12" r="11" fill="#111" stroke="#888" /><circle cx="12" cy="12" r="9.800" fill="none" stroke="#fff" strokeWidth="0.700" /><circle cx="12" cy="12" r="5.500" fill="#e3262a" /></svg></div>
      <div className="ml-auto flex items-center h-full">
        <div className={`${slot} w-[38px]`}><svg viewBox="0 0 16 16" className="w-4 h-4"><path d="M4 2h6v3M4 2v12h6v-3M8 6h4v4H8zM12 7l2-1v4l-2-1M5 0h4" className={f} strokeWidth="1.100" /></svg></div>
        <div className={`${slot} w-[38px]`}><svg viewBox="0 0 18 16" className="w-4 h-4"><path d="M5 4h11v8H8M16 6.500h1.500v3H16M1 7h6v3a3 3 0 01-6 0zM2.500 7V4M5.500 7V4M4 13v2" className={f} strokeWidth="1.200" /><path d="M9 6h5v4H9z" fill="currentColor" /></svg></div>
        <div className={`${slot} w-[38px]`}><svg viewBox="0 0 16 16" className="w-[15px] h-[15px]"><path d="M2 14C2 7 7 2 14 2M5.500 14c0-5 3.500-8.500 8.500-8.500M9 14c0-3 2-5 5-5" className={f} strokeWidth="1.100" /><circle cx="13" cy="13" r="1.500" fill="currentColor" /></svg></div>
        <div className={`${slot} w-[37px]`}><svg viewBox="0 0 18 16" className="w-4 h-4"><path d="M1 5.500h3l4-4v13l-4-4H1zM10 6c1 1 1 3 0 4M12.500 4c2 2 2 6 0 8M15 2c3 3 3 9 0 12" className={f} strokeWidth="1.100" /></svg></div>
        <div className={`${slot} w-[37px]`}><svg viewBox="0 0 14 16" className="w-[14px] h-4"><rect x="4.500" y="1" width="5" height="9" rx="2.500" fill="currentColor" /><path d="M2.500 7c0 6 9 6 9 0M7 12v3M4.500 15h5" className={f} strokeWidth="1.200" /></svg></div>
        <div className={`${slot} w-[39px]`}><svg viewBox="0 0 22 14" className="w-[21px] h-[13px]"><path d="M1 1h20v12H1zM3 4h16M3 7h16" className={f} strokeWidth="1" /><path d="M3 4h16M3 7h16" stroke="#d5d6d6" strokeDasharray="1 2" /><path d="M6 10h10" stroke="currentColor" /></svg></div>
        <div className="w-[58px] flex flex-col items-center text-[12px] leading-[16px] font-['Open_Sans'] font-stretch-normal"><Fit w={41}>1:43 AM</Fit><Fit w={49}>12/6/2020</Fit></div>
        <div className={`${slot} w-[48px]`}>
          <svg viewBox="0 0 20 20" className="w-[18px] h-[18px] overflow-visible"><path d="M2 2h15v12H8l-3 3v-3H2z" fill="#111" /><path d="M4 5h11M4 8h11M4 11h6" stroke="#ddd" /><circle cx="17" cy="15.500" r="6.500" fill="#333" stroke="#d5d6d6" /><text x="17" y="19" textAnchor="middle" className="text-[10px] fill-white font-['Liberation_Sans']">3</text></svg>
        </div>
      </div>
    </div>
  );
}

export default function App() {
  return (
    <div className="w-[1280px] h-[720px] overflow-hidden flex flex-col bg-[#414a50] font-['Open_Sans','Noto_Sans',sans-serif] font-stretch-condensed">
      <Toolbar />
      <div className="h-[606px] shrink-0 flex overflow-hidden">
        <Browser />
        <Mixer />
        <InsertPanel />
      </div>
      <Taskbar />
    </div>
  );
}
